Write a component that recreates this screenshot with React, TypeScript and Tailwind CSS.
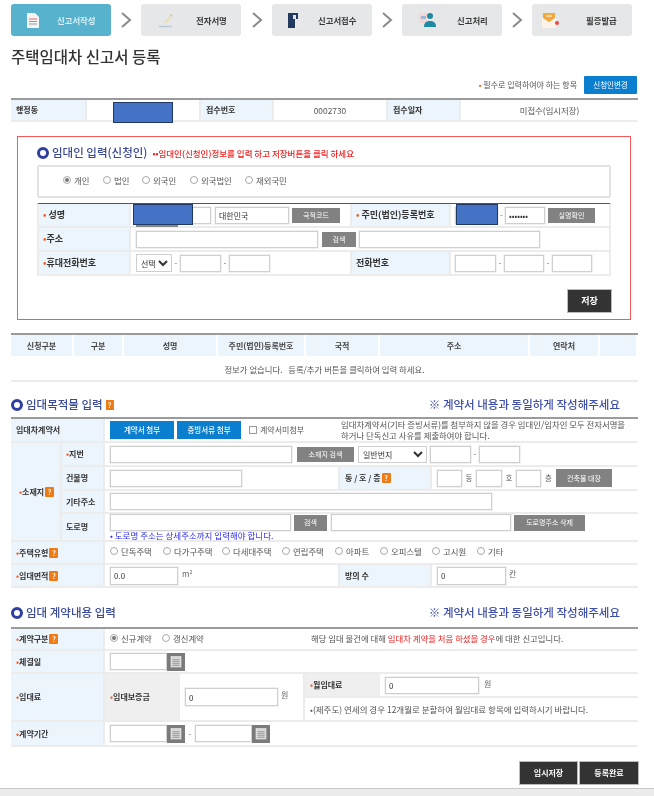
import React from "react";

const font = "[font-family:'Noto_Sans_CJK_KR','Liberation_Sans',sans-serif]";

function Chevron({ className }: { className?: string }) {
  return (
    <div className={`flex justify-center ${className ?? "w-[30px]"}`}>
      <svg width="12" height="18" viewBox="0 0 12 18" fill="none">
        <path d="M2 2l8 7-8 7" stroke="#8a8a8a" strokeWidth="2" />
      </svg>
    </div>
  );
}

function Step({ icon, label, active, iconBox }: { icon: React.ReactNode; label: string; active?: boolean; iconBox: string }) {
  return (
    <div className={`w-[100px] h-[32px] rounded-[3px] flex items-center ${active ? "bg-[#56b2cd]" : "bg-[#e6e7e9]"}`}>
      <div className={`flex items-center shrink-0 ${iconBox}`}>{icon}</div>
      <span className={`text-[8.4px] font-bold whitespace-nowrap ${active ? "text-[#d9eef5]" : "text-[#3a3a3a]"}`}>{label}</span>
    </div>
  );
}

function Dot() {
  return <span className="text-[#f0602a] font-bold">•</span>;
}

function Help() {
  return (
    <span className="inline-flex w-[9px] h-[10px] bg-[#ee7b16] text-white text-[7px] leading-[10px] font-bold items-center justify-center rounded-[1px] ml-[1px]">?</span>
  );
}

function Inp({ className, value }: { className: string; value?: string }) {
  return (
    <input
      readOnly
      value={value ?? ""}
      className={`h-[17px] bg-white border border-[#cfcfcf] shadow-[0_0_0_0.5px_#e4e4e4] px-[3px] text-[8px] text-[#333] outline-none shrink-0 ${className}`}
    />
  );
}

function GBtn({ className, children }: { className: string; children: React.ReactNode }) {
  return (
    <div className={`h-[15px] bg-[#828282] text-white text-[7px] flex items-center justify-center shrink-0 ${className}`}>{children}</div>
  );
}

function Radio({ on, className, children }: { on?: boolean; className: string; children: React.ReactNode }) {
  return (
    <div className={`flex items-center shrink-0 ${className}`}>
      <span className="w-[8px] h-[8px] rounded-full border border-[#a9a9a9] bg-white flex items-center justify-center shrink-0">
        {on && <span className="w-[4px] h-[4px] rounded-full bg-[#777]" />}
      </span>
      <span className="ml-[3px] text-[8.4px] text-[#555] whitespace-nowrap">{children}</span>
    </div>
  );
}

function Dash({ className }: { className?: string }) {
  return <span className={`text-[8px] text-[#666] text-center shrink-0 ${className ?? "w-[8px]"}`}>-</span>;
}

function SectionHead({ title, help, note }: { title: string; help?: boolean; note?: boolean }) {
  return (
    <div className="h-[14px] flex items-center justify-between pl-[11px] pr-[34px]">
      <div className="flex items-center">
        <span className="w-[12px] h-[12px] rounded-full border-[3px] border-[#2f3f9e] shrink-0" />
        <span className="ml-[3px] text-[11.5px] text-[#3a4a96] font-medium whitespace-nowrap">{title}</span>
        {help && <span className="ml-[3px] inline-flex w-[8px] h-[10px] bg-[#ee7b16] text-white text-[7px] font-bold items-center justify-center">?</span>}
      </div>
      {note && <span className="text-[11.5px] text-[#3f4fa8] font-medium whitespace-nowrap">※ 계약서 내용과 동일하게 작성해주세요</span>}
    </div>
  );
}

const lab = "bg-[#edf5fc] text-[8px] font-bold text-[#333] flex items-center shrink-0 border-r-2 border-[#ececec]";
const row = "flex border-b-2 border-[#ececec]";

function Cal() {
  return (
    <div className="w-[18px] h-[18px] bg-[#7b7b7b] flex items-center justify-center shrink-0">
      <svg width="12" height="13" viewBox="0 0 12 13">
        <rect x="1" y="1.5" width="10" height="10.5" fill="#d8d8d8" stroke="#eee" strokeWidth="0.6" />
        <path d="M2 4.5h8M2 6.5h8M2 8.5h8M2 10.5h8M4 4v7M6 4v7M8 4v7" stroke="#8c8c8c" strokeWidth="0.5" />
      </svg>
    </div>
  );
}

function Dark({ className, children }: { className: string; children: React.ReactNode }) {
  return (
    <div className={`h-[22px] bg-[#333] shadow-[0_0_0_1px_#bbb] text-white text-[8px] font-bold flex items-center justify-center ${className}`}>{children}</div>
  );
}

const Redact = ({ className }: { className: string }) => (
  <div className={`absolute bg-[#4472c4] border border-[#1f3864] ${className}`} />
);

export default function App() {
  return (
    <div className={`${font} relative w-[654px] h-[796px] overflow-hidden bg-white blur-[0.5px]`}>
      {/* Steps */}
      <div className="flex items-center pl-[11px] pt-[4px]">
        <Step active iconBox="w-[46px] pl-[16px]" label="신고서작성" icon={
          <svg width="12" height="15" viewBox="0 0 12 15"><path d="M0 0h8l4 4v11H0z" fill="#f4f4f4" /><path d="M2 6h8" stroke="#e06a6a" /><path d="M2 8.5h8M2 11h8" stroke="#9a9a9a" /></svg>
        } />
        <Chevron />
        <Step iconBox="w-[55px] pl-[17px]" label="전자서명" icon={
          <svg width="16" height="15" viewBox="0 0 16 15"><path d="M1 13.5h13" stroke="#b9c6d4" strokeWidth="1.4" /><path d="M6 9l6-6 1.5 1.5-6 6z" fill="#e9e0b4" /><path d="M12 2l2-1 0 3z" fill="#e6c14a" /></svg>
        } />
        <Chevron className="w-[31px]" />
        <Step iconBox="w-[46px] pl-[16px]" label="신고서접수" icon={
          <svg width="14" height="15" viewBox="0 0 14 15"><rect x="0" y="0" width="10" height="15" fill="#24395f" /><rect x="7" y="6" width="6" height="9" fill="#e9e9e9" /><rect x="5" y="2" width="3" height="4" fill="#e6e7e9" /></svg>
        } />
        <Chevron />
        <Step iconBox="w-[55px] pl-[17px]" label="신고처리" icon={
          <svg width="17" height="16" viewBox="0 0 17 16"><rect x="0" y="1" width="8" height="10" fill="#f1d8d4" /><rect x="2" y="4" width="5" height="3" fill="#9db8d6" /><circle cx="11" cy="4" r="3" fill="#1f8aa3" /><path d="M5 15c0-5 3-6 6-6s6 1 6 6z" fill="#1f8aa3" /></svg>
        } />
        <Chevron />
        <Step iconBox="w-[54px] pl-[10px]" label="필증발급" icon={
          <svg width="18" height="16" viewBox="0 0 18 16"><path d="M0 5l7 6 7-6v11H0z" fill="#fbf3ea" /><path d="M1 1h12v5l-6 4-6-4z" fill="#f2a93a" /><path d="M4 4h6" stroke="#fff" /><circle cx="15" cy="11" r="2" fill="#e84a4a" /></svg>
        } />
      </div>

      {/* Title */}
      <h1 className="pl-[11px] mt-[9px] h-[22px] leading-[22px] text-[15.5px] font-medium text-[#333]">주택임대차 신고서 등록</h1>

      {/* Required */}
      <div className="mt-[9px] h-[18px] pr-[17px] flex items-center justify-end">
        <span className="text-[8px] text-[#555]"><span className="text-[#f0602a]">•</span> 필수로 입력하여야 하는 항목</span>
        <div className="ml-[7px] w-[53px] h-[18px] bg-[#0a7fd0] rounded-[1px] text-white text-[7.5px] flex items-center justify-center">신청인변경</div>
      </div>

      {/* Info table */}
      <div className="mt-[4px] ml-[11px] w-[627px] h-[24px] border-t-2 border-[#9b9b9b] border-b-2 border-b-[#ececec] flex text-[8.4px] text-[#555]">
        <div className={`${lab} w-[76px] pl-[5px]`}>행정동</div>
        <div className="w-[112px]" />
        <div className={`${lab} w-[75px] pl-[5px] border-l-2 border-l-[#ececec]`}>접수번호</div>
        <div className="w-[112px] flex items-center justify-center">0002730</div>
        <div className={`${lab} w-[75px] pl-[5px] border-l-2 border-l-[#ececec]`}>접수일자</div>
        <div className="flex-1 flex items-center justify-center">미접수(임시저장)</div>
      </div>

      {/* Red box */}
      <div className="mt-[14px] ml-[17px] w-[614px] h-[184px] border border-[#f55a5a] pl-[19px] pr-[19px] pt-[9px]">
        <div className="flex items-center h-[14px]">
          <span className="w-[12px] h-[12px] rounded-full border-[3px] border-[#2f3f9e] shrink-0" />
          <span className="ml-[3px] text-[11.5px] text-[#3a4a96] font-medium whitespace-nowrap">임대인 입력(신청인)</span>
          <span className="ml-[5px] text-[8.5px] text-[#f02020] font-medium whitespace-nowrap">••임대인(신청인)정보를 입력 하고 저장버튼을 클릭 하세요</span>
        </div>
        <div className="mt-[5px] h-[33px] border-2 border-[#e2e2e2] rounded-[2px] flex items-center pl-[24px] pb-[2px]">
          <Radio on className="w-[40px]">개인</Radio>
          <Radio className="w-[39px]">법인</Radio>
          <Radio className="w-[48px]">외국인</Radio>
          <Radio className="w-[55px]">외국법인</Radio>
          <Radio className="w-[50px]">재외국민</Radio>
        </div>
        <div className="mt-[5px] border-t-[1.5px] border-[#555] border-x-2 border-x-[#ececec]">
          <div className={`${row} h-[24px]`}>
            <div className={`${lab} w-[92px] pl-[4px] text-[9px]`}><Dot />&nbsp;성명</div>
            <div className="w-[219px] flex items-center pl-[5px]">
              <Inp className="w-[75px]" />
              <Inp className="w-[74px] ml-[4px]" value="대한민국" />
              <GBtn className="w-[48px] ml-[3px]">국적코드</GBtn>
            </div>
            <div className={`${lab} w-[101px] pl-[4px] text-[9px] border-l-2 border-l-[#ececec]`}><Dot />&nbsp;주민(법인)등록번호</div>
            <div className="flex-1 flex items-center pl-[4px]">
              <Inp className="w-[43px]" />
              <Dash className="w-[7px]" />
              <Inp className="w-[40px]" value="•••••••" />
              <GBtn className="w-[47px] ml-[3px]">실명확인</GBtn>
            </div>
          </div>
          <div className={`${row} h-[24px]`}>
            <div className={`${lab} w-[92px] pl-[4px] text-[9px]`}><Dot />주소</div>
            <div className="flex-1 flex items-center pl-[5px]">
              <Inp className="w-[182px]" />
              <GBtn className="w-[34px] ml-[4px]">검색</GBtn>
              <Inp className="w-[181px] ml-[3px]" />
            </div>
          </div>
          <div className={`${row} h-[24px]`}>
            <div className={`${lab} w-[92px] pl-[4px] text-[9px]`}><Dot />휴대전화번호</div>
            <div className="w-[219px] flex items-center pl-[5px]">
              <select className="w-[36px] h-[18px] bg-white border border-[#cfcfcf] text-[8px] text-[#333] shrink-0"><option>선택</option></select>
              <Dash />
              <Inp className="w-[41px]" />
              <Dash />
              <Inp className="w-[41px]" />
            </div>
            <div className={`${lab} w-[101px] pl-[4px] text-[9px] border-l-2 border-l-[#ececec]`}>전화번호</div>
            <div className="flex-1 flex items-center pl-[4px]">
              <Inp className="w-[41px]" />
              <Dash />
              <Inp className="w-[40px]" />
              <Dash />
              <Inp className="w-[40px]" />
            </div>
          </div>
        </div>
        <div className="mt-[14px] flex justify-end">
          <Dark className="w-[43px] text-[9px]">저장</Dark>
        </div>
      </div>

      {/* Applicant list */}
      <div className="mt-[13px] ml-[11px] w-[627px] border-t-2 border-[#9b9b9b]">
        <div className="flex h-[23px] bg-[#edf5fc] border-b-2 border-white text-[8px] font-bold text-[#444] text-center">
          {[
            ["w-[63px]", "신청구분"],
            ["w-[50px]", "구분"],
            ["w-[94px]", "성명"],
            ["w-[88px]", "주민(법인)등록번호"],
            ["w-[74px]", "국적"],
            ["w-[150px]", "주소"],
            ["w-[70px]", "연락처"],
            ["flex-1", ""],
          ].map(([w, t], i) => (
            <div key={i} className={`${w} flex items-center justify-center border-r-2 border-white`}>{t}</div>
          ))}
        </div>
        <div className="h-[24px] border-b-2 border-[#ececec] flex items-center justify-center text-[8.4px] text-[#555]">정보가 없습니다. &nbsp; 등록/추가 버튼을 클릭하여 입력 하세요.</div>
      </div>

      <div className="mt-[16px]"><SectionHead title="임대목적물 입력" help note /></div>

      {/* Property table */}
      <div className="mt-[5px] ml-[11px] w-[627px] border-t-2 border-[#9b9b9b]">
        <div className={`${row} h-[24px]`}>
          <div className={`${lab} w-[94px] pl-[5px]`}>임대차계약서</div>
          <div className="flex-1 flex items-center pl-[5px]">
            <div className="w-[64px] h-[18px] bg-[#0a7fd0] text-white text-[7.5px] font-medium flex items-center justify-center">계약서 첨부</div>
            <div className="w-[64px] h-[18px] ml-[3px] bg-[#0a7fd0] text-white text-[7.5px] font-medium flex items-center justify-center">증빙서류 첨부</div>
            <span className="ml-[8px] w-[8px] h-[8px] border border-[#999] shrink-0" />
            <span className="ml-[3px] w-[81px] text-[8px] text-[#555] whitespace-nowrap">계약서미첨부</span>
            <div className="text-[8.4px] leading-[11px] text-[#555] whitespace-nowrap">
              <div>임대차계약서(기타 증빙서류)를 첨부하지 않을 경우 임대인/임차인 모두 전자서명을</div>
              <div>하거나 단독신고 사유를 제출하여야 합니다.</div>
            </div>
          </div>
        </div>
        <div className="flex border-b-2 border-[#ececec]">
          <div className={`${lab} w-[51px] pl-[8px]`}><Dot />소재지 <Help /></div>
          <div className="flex-1">
            <div className={`${row} h-[24px]`}>
              <div className={`${lab} w-[43px] pl-[4px]`}><Dot />지번</div>
              <div className="flex-1 flex items-center pl-[5px]">
                <Inp className="w-[182px]" />
                <GBtn className="w-[57px] ml-[5px]">소재지 검색</GBtn>
                <select className="w-[69px] h-[17px] ml-[4px] bg-white border border-[#cfcfcf] text-[8px] text-[#333] shrink-0"><option>일반번지</option></select>
                <Inp className="w-[41px] ml-[3px]" />
                <Dash />
                <Inp className="w-[41px]" />
              </div>
            </div>
            <div className={`${row} h-[24px]`}>
              <div className={`${lab} w-[43px] pl-[4px]`}>건물명</div>
              <div className="w-[233px] flex items-center pl-[5px]"><Inp className="w-[132px]" /></div>
              <div className={`${lab} w-[94px] pl-[5px] border-l-2 border-l-[#ececec]`}>동 / 호 / 층 <Help /></div>
              <div className="flex-1 flex items-center pl-[5px] text-[7.5px] text-[#666]">
                <Inp className="w-[25px]" /><span className="w-[14px] text-center">동</span>
                <Inp className="w-[26px]" /><span className="w-[14px] text-center">호</span>
                <Inp className="w-[25px]" /><span className="w-[15px] text-center">층</span>
                <GBtn className="w-[56px] h-[18px]">건축물 대장</GBtn>
              </div>
            </div>
            <div className={`${row} h-[23px]`}>
              <div className={`${lab} w-[43px] pl-[4px]`}>기타주소</div>
              <div className="flex-1 flex items-center pl-[5px]"><Inp className="w-[382px]" /></div>
            </div>
            <div className="flex h-[26px]">
              <div className={`${lab} w-[43px] pl-[4px]`}>도로명</div>
              <div className="flex-1 pl-[5px]">
                <div className="flex items-center">
                  <Inp className="w-[181px]" />
                  <GBtn className="w-[33px] ml-[3px] h-[16px]">검색</GBtn>
                  <Inp className="w-[180px] ml-[4px]" />
                  <GBtn className="w-[71px] ml-[3px] h-[16px]">도로명주소 삭제</GBtn>
                </div>
                <div className="mt-[0px] text-[8.5px] leading-[9px] text-[#2a2af0] whitespace-nowrap">• 도로명 주소는 상세주소까지 입력해야 합니다.</div>
              </div>
            </div>
          </div>
        </div>
        <div className={`${row} h-[23px]`}>
          <div className={`${lab} w-[94px] pl-[5px]`}><Dot />주택유형 <Help /></div>
          <div className="flex-1 flex items-center pl-[5px] pb-[3px]">
            <Radio className="w-[53px]">단독주택</Radio>
            <Radio className="w-[59px]">다가구주택</Radio>
            <Radio className="w-[60px]">다세대주택</Radio>
            <Radio className="w-[53px]">연립주택</Radio>
            <Radio className="w-[45px]">아파트</Radio>
            <Radio className="w-[52px]">오피스텔</Radio>
            <Radio className="w-[45px]">고시원</Radio>
            <Radio className="w-[30px]">기타</Radio>
          </div>
        </div>
        <div className={`${row} h-[23px]`}>
          <div className={`${lab} w-[94px] pl-[5px]`}><Dot />임대면적 <Help /></div>
          <div className="w-[233px] flex items-center pl-[5px] text-[8px] text-[#666]">
            <Inp className="w-[68px] h-[18px]" value="0.0" />
            <span className="ml-[4px] pb-[4px]">m<sup className="text-[5px]">2</sup></span>
          </div>
          <div className={`${lab} w-[94px] pl-[5px] border-l-2 border-l-[#ececec]`}>방의 수</div>
          <div className="flex-1 flex items-center pl-[5px] text-[8px] text-[#666]">
            <Inp className="w-[69px] h-[18px]" value="0" />
            <span className="ml-[3px] pb-[4px]">칸</span>
          </div>
        </div>
      </div>

      <div className="mt-[18px]"><SectionHead title="임대 계약내용 입력" note /></div>

      {/* Contract table */}
      <div className="mt-[7px] ml-[11px] w-[627px] border-t-2 border-[#9b9b9b]">
        <div className={`${row} h-[22px]`}>
          <div className={`${lab} w-[94px] pl-[5px]`}><Dot />계약구분 <Help /></div>
          <div className="flex-1 flex items-center pl-[5px] pb-[2px]">
            <Radio on className="w-[52px]">신규계약</Radio>
            <Radio className="w-[149px]">갱신계약</Radio>
            <span className="text-[8.4px] text-[#555] whitespace-nowrap">해당 임대 물건에 대해 <span className="text-[#f02020]">임대차 계약을 처음 하셨을 경우</span>에 대한 신고입니다.</span>
          </div>
        </div>
        <div className={`${row} h-[23px]`}>
          <div className={`${lab} w-[94px] pl-[5px]`}><Dot />체결일</div>
          <div className="flex-1 flex items-center pl-[5px]"><Inp className="w-[57px]" /><Cal /></div>
        </div>
        <div className={`${row} h-[48px]`}>
          <div className={`${lab} w-[94px] pl-[5px]`}><Dot />임대료</div>
          <div className="w-[75px] bg-[#efefef] text-[8px] font-bold text-[#333] flex items-center pl-[5px] shrink-0"><Dot />임대보증금</div>
          <div className="w-[125px] flex items-center pl-[5px] border-r-2 border-[#ececec] text-[8px] text-[#666]">
            <Inp className="w-[93px] h-[18px]" value="0" />
            <span className="ml-[3px] pb-[4px]">원</span>
          </div>
          <div className="flex-1">
            <div className="h-[24px] flex border-b-2 border-[#ececec]">
              <div className="w-[75px] bg-[#efefef] text-[8px] font-bold text-[#333] flex items-center pl-[5px] shrink-0"><Dot />월임대료</div>
              <div className="flex-1 flex items-center pl-[5px] text-[8px] text-[#666]">
                <Inp className="w-[94px]" value="0" />
                <span className="ml-[5px] pb-[2px]">원</span>
              </div>
            </div>
            <div className="h-[22px] flex items-center pl-[5px] text-[8.5px] text-[#555] whitespace-nowrap">•(제주도) 연세의 경우 12개월로 분할하여 월임대료 항목에 입력하시기 바랍니다.</div>
          </div>
        </div>
        <div className={`${row} h-[25px]`}>
          <div className={`${lab} w-[94px] pl-[5px]`}><Dot />계약기간</div>
          <div className="flex-1 flex items-center pl-[5px]">
            <Inp className="w-[57px]" /><Cal />
            <Dash className="w-[10px]" />
            <Inp className="w-[57px]" /><Cal />
          </div>
        </div>
      </div>

      {/* Bottom buttons */}
      <div className="mt-[15px] pr-[16px] flex justify-end gap-[3px]">
        <Dark className="w-[57px]">임시저장</Dark>
        <Dark className="w-[58px]">등록완료</Dark>
      </div>

      <div className="absolute left-0 right-0 top-[788px] h-[8px] bg-[#ececec] border-t border-[#c8c8c8]" />

      <div className="absolute left-[136px] top-[224px] w-[42px] h-[3px] bg-[#888]" />
      <Redact className="left-[113px] top-[102px] w-[60px] h-[21px]" />
      <Redact className="left-[133px] top-[204px] w-[60px] h-[21px]" />
      <Redact className="left-[456px] top-[204px] w-[42px] h-[21px]" />
    </div>
  );
}
